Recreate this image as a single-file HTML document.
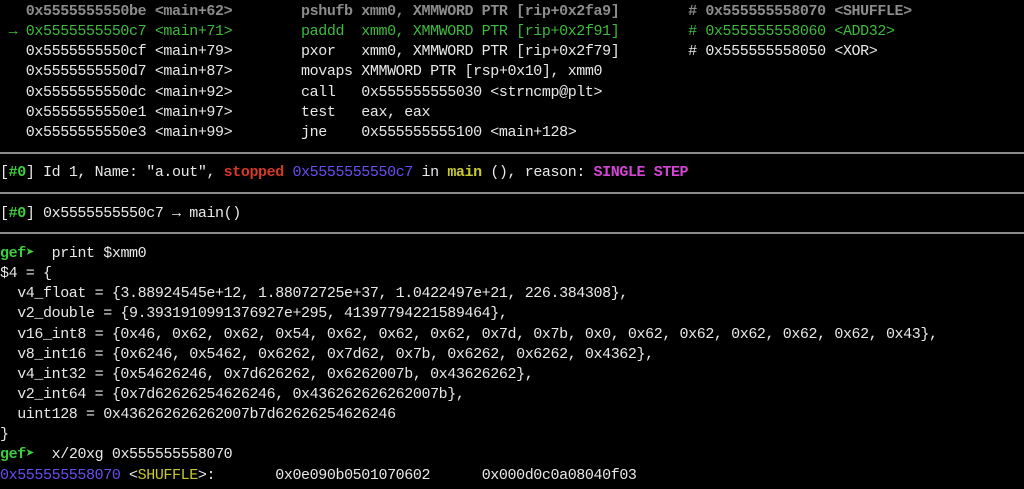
<!DOCTYPE html>
<html><head><style>
html,body{margin:0;padding:0;background:#000;width:1024px;height:489px;overflow:hidden}
.t{position:absolute;left:0;top:2px;font-family:"Liberation Mono",monospace;font-size:15px;letter-spacing:-0.4px;line-height:20.15px;color:#e8e8e8;white-space:pre}
.g{color:#8c8c8c;font-weight:bold}
.gr{color:#3dbb3d}
.p{color:#6b4cf0}
.r{color:#d5392a;font-weight:bold}
.y{color:#c9c92e;font-weight:bold}
.m{color:#d545d5;font-weight:bold}
.gf{color:#3ecf3e;font-weight:bold}
.sep{position:absolute;left:0;width:1024px;height:2px;background:#8a8a8a}
</style></head><body>
<div class="t"><span class="g">   0x5555555550be &lt;main+62&gt;        pshufb xmm0, XMMWORD PTR [rip+0x2fa9]        # 0x555555558070 &lt;SHUFFLE&gt;</span>
<span class="gr"> → 0x5555555550c7 &lt;main+71&gt;        paddd  xmm0, XMMWORD PTR [rip+0x2f91]        # 0x555555558060 &lt;ADD32&gt;</span>
   0x5555555550cf &lt;main+79&gt;        pxor   xmm0, XMMWORD PTR [rip+0x2f79]        # 0x555555558050 &lt;XOR&gt;
   0x5555555550d7 &lt;main+87&gt;        movaps XMMWORD PTR [rsp+0x10], xmm0
   0x5555555550dc &lt;main+92&gt;        call   0x555555555030 &lt;strncmp@plt&gt;
   0x5555555550e1 &lt;main+97&gt;        test   eax, eax
   0x5555555550e3 &lt;main+99&gt;        jne    0x555555555100 &lt;main+128&gt;

[<span class="gf">#0</span>] Id 1, Name: "a.out", <span class="r">stopped</span> <span class="p">0x5555555550c7</span> in <span class="y">main</span> (), reason: <span class="m">SINGLE STEP</span>

[<span class="gf">#0</span>] 0x5555555550c7 → main()

<span class="gf">gef➤</span>  print $xmm0
$4 = {
  v4_float = {3.88924545e+12, 1.88072725e+37, 1.0422497e+21, 226.384308},
  v2_double = {9.3931910991376927e+295, 41397794221589464},
  v16_int8 = {0x46, 0x62, 0x62, 0x54, 0x62, 0x62, 0x62, 0x7d, 0x7b, 0x0, 0x62, 0x62, 0x62, 0x62, 0x62, 0x43},
  v8_int16 = {0x6246, 0x5462, 0x6262, 0x7d62, 0x7b, 0x6262, 0x6262, 0x4362},
  v4_int32 = {0x54626246, 0x7d626262, 0x6262007b, 0x43626262},
  v2_int64 = {0x7d62626254626246, 0x436262626262007b},
  uint128 = 0x436262626262007b7d62626254626246
}
<span class="gf">gef➤</span>  x/20xg 0x555555558070
<span class="p">0x555555558070</span> &lt;<span class="y" style="font-weight:normal">SHUFFLE</span>&gt;:       0x0e090b0501070602      0x000d0c0a08040f03</div>
<div class="sep" style="top:152px"></div>
<div class="sep" style="top:192px"></div>
<div class="sep" style="top:232px"></div>
</body></html>
